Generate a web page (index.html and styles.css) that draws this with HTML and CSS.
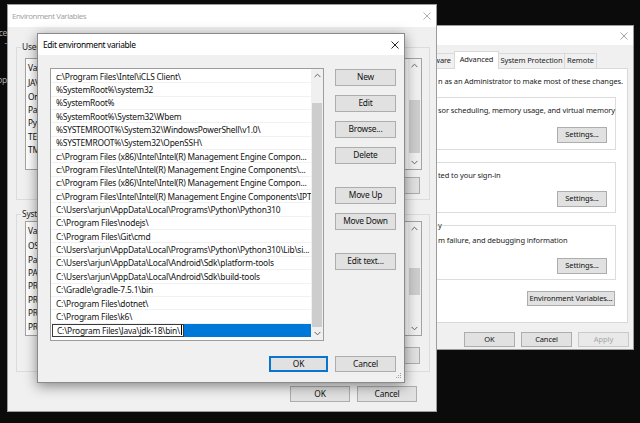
FILE: index.html
```html
<!DOCTYPE html>
<html lang="en">
<head>
    <meta charset="UTF-8">
    <meta name="viewport" content="width=device-width, initial-scale=1.0">
    <title>Edit environment variable</title>
    <link rel="stylesheet" href="styles.css">
</head>
<body>

<div id="desk">

    <div class="peek">
        <div class="peek_line">ce</div>
        <div class="peek_line">-</div>
        <div class="peek_line peek_low">op</div>
    </div>

    <!-- System Properties, behind everything -->
    <div class="win" id="sysprop">
        <div class="titlebar">
            <span class="title">System Properties</span>
            <svg class="close" viewBox="0 0 8 8" width="8" height="8"><path d="M0.5 0.5L7.5 7.5M7.5 0.5L0.5 7.5" stroke="#9a9a9a" stroke-width="0.9"/></svg>
        </div>
        <div class="sp_body">
            <div class="tabs">
                <div class="tab" id="tab_hw">Hardware</div>
                <div class="tab tab_sel" id="tab_adv">Advanced</div>
                <div class="tab" id="tab_sp">System Protection</div>
                <div class="tab" id="tab_rem">Remote</div>
            </div>
            <div class="tabpanel">
                <div class="sp_note">n as an Administrator to make most of these changes.</div>
                <fieldset class="sp_group">
                    <div class="sp_text">sor scheduling, memory usage, and virtual memory</div>
                    <div class="sp_btnrow"><button class="btn">Settings...</button></div>
                </fieldset>
                <fieldset class="sp_group sp_group2">
                    <div class="sp_text">ted to your sign-in</div>
                    <div class="sp_btnrow"><button class="btn">Settings...</button></div>
                </fieldset>
                <fieldset class="sp_group sp_group3">
                    <legend>y</legend>
                    <div class="sp_text">m failure, and debugging information</div>
                    <div class="sp_btnrow"><button class="btn">Settings...</button></div>
                </fieldset>
                <div class="sp_btnrow sp_envrow"><button class="btn" id="envbtn">Environment Variables...</button></div>
            </div>
            <div class="sp_foot">
                <button class="btn">OK</button>
                <button class="btn">Cancel</button>
                <button class="btn" disabled>Apply</button>
            </div>
        </div>
    </div>

    <!-- Environment Variables -->
    <div class="win" id="envvars">
        <div class="titlebar">
            <span class="title">Environment Variables</span>
            <svg class="close" viewBox="0 0 8 8" width="8" height="8"><path d="M0.5 0.5L7.5 7.5M7.5 0.5L0.5 7.5" stroke="#a8a8a8" stroke-width="0.9"/></svg>
        </div>
        <div class="ev_body">
            <fieldset class="ev_group">
                <legend>User variables for arjun</legend>
                <div class="listview lv_user">
                    <div class="lv_rows">
                        <div class="lv_head"><span class="lv_col1">Variable</span><span>Value</span></div>
                        <div class="lv_row"><span class="lv_col1">JAVA_HOME</span></div>
                        <div class="lv_row"><span class="lv_col1">OneDrive</span></div>
                        <div class="lv_row"><span class="lv_col1">Path</span></div>
                        <div class="lv_row"><span class="lv_col1">PyCharm Community Edition</span></div>
                        <div class="lv_row"><span class="lv_col1">TEMP</span></div>
                        <div class="lv_row"><span class="lv_col1">TMP</span></div>
                    </div>
                    <div class="vscroll">
                        <div class="sb_arrow"><svg viewBox="0 0 8 5" width="7" height="5"><path d="M0.7 4.3L4 1L7.3 4.3" fill="none" stroke="#606060" stroke-width="1.1"/></svg></div>
                        <div class="sb_track"><div class="sb_thumb" style="margin-top:28px;height:53px"></div></div>
                        <div class="sb_arrow"><svg viewBox="0 0 8 5" width="7" height="5"><path d="M0.7 0.7L4 4L7.3 0.7" fill="none" stroke="#606060" stroke-width="1.1"/></svg></div>
                    </div>
                </div>
                <div class="grp_btns">
                    <button class="btn">New...</button>
                    <button class="btn">Edit...</button>
                    <button class="btn">Delete</button>
                </div>
            </fieldset>

            <fieldset class="ev_group" id="sys_group">
                <legend>System variables</legend>
                <div class="listview lv_sys">
                    <div class="lv_rows">
                        <div class="lv_head"><span class="lv_col1">Variable</span><span>Value</span></div>
                        <div class="lv_row"><span class="lv_col1">OS</span></div>
                        <div class="lv_row"><span class="lv_col1">Path</span></div>
                        <div class="lv_row"><span class="lv_col1">PATHEXT</span></div>
                        <div class="lv_row"><span class="lv_col1">PROCESSOR_ARCHITECTURE</span></div>
                        <div class="lv_row"><span class="lv_col1">PROCESSOR_IDENTIFIER</span></div>
                        <div class="lv_row"><span class="lv_col1">PROCESSOR_LEVEL</span></div>
                        <div class="lv_row"><span class="lv_col1">PROCESSOR_REVISION</span></div>
                    </div>
                    <div class="vscroll">
                        <div class="sb_arrow"><svg viewBox="0 0 8 5" width="7" height="5"><path d="M0.7 4.3L4 1L7.3 4.3" fill="none" stroke="#606060" stroke-width="1.1"/></svg></div>
                        <div class="sb_track"><div class="sb_thumb" style="margin-top:33px;height:27px"></div></div>
                        <div class="sb_arrow"><svg viewBox="0 0 8 5" width="7" height="5"><path d="M0.7 0.7L4 4L7.3 0.7" fill="none" stroke="#606060" stroke-width="1.1"/></svg></div>
                    </div>
                </div>
                <div class="grp_btns">
                    <button class="btn">New...</button>
                    <button class="btn">Edit...</button>
                    <button class="btn">Delete</button>
                </div>
            </fieldset>

            <div class="ev_foot">
                <button class="btn">OK</button>
                <button class="btn">Cancel</button>
            </div>
        </div>
    </div>

    <!-- Edit environment variable, on top -->
    <div class="win" id="editvar">
        <div class="titlebar">
            <span class="title">Edit environment variable</span>
            <svg class="close" viewBox="0 0 8 8" width="8" height="8"><path d="M0.5 0.5L7.5 7.5M7.5 0.5L0.5 7.5" stroke="#111" stroke-width="0.9"/></svg>
        </div>
        <div class="ed_body">
            <div class="ed_main">
                <div class="pathlist">
                    <div class="pl_rows">
                        <div class="pl_row">c:\Program Files\Intel\iCLS Client\</div>
                        <div class="pl_row">%SystemRoot%\system32</div>
                        <div class="pl_row">%SystemRoot%</div>
                        <div class="pl_row">%SystemRoot%\System32\Wbem</div>
                        <div class="pl_row">%SYSTEMROOT%\System32\WindowsPowerShell\v1.0\</div>
                        <div class="pl_row">%SYSTEMROOT%\System32\OpenSSH\</div>
                        <div class="pl_row">c:\Program Files (x86)\Intel\Intel(R) Management Engine Compon...</div>
                        <div class="pl_row">c:\Program Files\Intel\Intel(R) Management Engine Components\...</div>
                        <div class="pl_row">c:\Program Files (x86)\Intel\Intel(R) Management Engine Compon...</div>
                        <div class="pl_row">c:\Program Files\Intel\Intel(R) Management Engine Components\IPT</div>
                        <div class="pl_row">C:\Users\arjun\AppData\Local\Programs\Python\Python310</div>
                        <div class="pl_row">C:\Program Files\nodejs\</div>
                        <div class="pl_row">C:\Program Files\Git\cmd</div>
                        <div class="pl_row">C:\Users\arjun\AppData\Local\Programs\Python\Python310\Lib\si...</div>
                        <div class="pl_row">C:\Users\arjun\AppData\Local\Android\Sdk\platform-tools</div>
                        <div class="pl_row">C:\Users\arjun\AppData\Local\Android\Sdk\build-tools</div>
                        <div class="pl_row">C:\Gradle\gradle-7.5.1\bin</div>
                        <div class="pl_row">C:\Program Files\dotnet\</div>
                        <div class="pl_row">C:\Program Files\k6\</div>
                        <div class="pl_row pl_editing">
                            <span class="pl_edit">C:\Program Files\Java\jdk-18\bin\<span class="caret"></span></span>
                            <span class="pl_sel"></span>
                        </div>
                    </div>
                    <div class="vscroll">
                        <div class="sb_arrow"><svg viewBox="0 0 8 5" width="7" height="5"><path d="M0.7 4.3L4 1L7.3 4.3" fill="none" stroke="#606060" stroke-width="1.1"/></svg></div>
                        <div class="sb_track"><div class="sb_thumb" style="margin-top:21px;flex:1"></div></div>
                        <div class="sb_arrow"><svg viewBox="0 0 8 5" width="7" height="5"><path d="M0.7 0.7L4 4L7.3 0.7" fill="none" stroke="#606060" stroke-width="1.1"/></svg></div>
                    </div>
                </div>
                <div class="ed_side">
                    <button class="btn">New</button>
                    <button class="btn">Edit</button>
                    <button class="btn">Browse...</button>
                    <button class="btn">Delete</button>
                    <button class="btn btn_gap">Move Up</button>
                    <button class="btn">Move Down</button>
                    <button class="btn btn_gap">Edit text...</button>
                </div>
            </div>
            <div class="ed_foot">
                <button class="btn btn_default">OK</button>
                <button class="btn">Cancel</button>
            </div>
            <svg class="grip" viewBox="0 0 6 6" width="6" height="6">
                <rect x="4" y="0" width="1" height="1" fill="#a0a0a0"/>
                <rect x="2" y="2" width="1" height="1" fill="#a0a0a0"/>
                <rect x="4" y="2" width="1" height="1" fill="#a0a0a0"/>
                <rect x="0" y="4" width="1" height="1" fill="#a0a0a0"/>
                <rect x="2" y="4" width="1" height="1" fill="#a0a0a0"/>
                <rect x="4" y="4" width="1" height="1" fill="#a0a0a0"/>
            </svg>
        </div>
    </div>

</div>

</body>
</html>
```

FILE: styles.css
```css
body{
    margin: 0;
    background-color: #0b0b0b;
    font-family: "Noto Sans", "Open Sans", sans-serif;
    font-size: 8.4px;
    letter-spacing: -0.2px;
    color: #111;
}
#desk{
    position: relative;
    width: 640px;
    height: 423px;
    overflow: hidden;
}

/* bits of desktop icon labels peeking out on the left */
.peek{
    position: absolute;
    left: 0;
    top: 28px;
    width: 7px;
    overflow: hidden;
    color: #a9a9a9;
    line-height: 10px;
}
.peek_line{
    display: flex;
    justify-content: flex-end;
    white-space: nowrap;
}
.peek_low{
    margin-top: 27px;
}

/* windows */
.win{
    position: absolute;
    box-sizing: border-box;
    display: flex;
    flex-direction: column;
    background-color: #f0f0f0;
    border: 1px solid #9c9c9c;
    overflow: hidden;
}
#sysprop{
    left: 300px;
    top: 25px;
    width: 334px;
    height: 325px;
    font-size: 7.5px;
    letter-spacing: -0.1px;
}
#envvars{
    left: 7px;
    top: 4px;
    width: 430px;
    height: 408px;
}
#editvar{
    left: 37px;
    top: 33px;
    width: 368px;
    height: 350px;
    border-color: #8a8a8a;
    box-shadow: 0 3px 12px rgba(0, 0, 0, 0.45);
}
.titlebar{
    flex: none;
    display: flex;
    align-items: center;
    justify-content: space-between;
    background-color: #fff;
    padding: 0 5px 0 5px;
    white-space: nowrap;
}
#sysprop .titlebar{
    height: 19px;
    color: #a0a0a0;
}
#envvars .titlebar{
    height: 22px;
    padding-left: 4px;
    color: #a3a3a3;
    font-size: 7.8px;
    letter-spacing: -0.4px;
}
#editvar .titlebar{
    height: 21px;
    color: #000;
    letter-spacing: -0.35px;
}
.close{
    flex: none;
}

/* buttons */
.btn{
    box-sizing: border-box;
    font-family: inherit;
    font-size: inherit;
    letter-spacing: inherit;
    color: #111;
    background-color: #e1e1e1;
    border: 1px solid #adadad;
    border-radius: 0;
    padding: 0;
    margin: 0;
    line-height: 1;
    white-space: nowrap;
}
.btn:disabled{
    color: #a6a6a6;
    background-color: #e9e9e9;
    border-color: #cacaca;
}
.btn_default{
    border: 2px solid #0a74d0;
}

/* scrollbars */
.vscroll{
    flex: none;
    width: 13px;
    display: flex;
    flex-direction: column;
    background-color: #f0f0f0;
}
.sb_arrow{
    flex: none;
    height: 13px;
    display: flex;
    align-items: center;
    justify-content: center;
}
.sb_track{
    flex: 1;
    display: flex;
    flex-direction: column;
}
.sb_thumb{
    background-color: #cdcdcd;
    margin: 0 1px;
}

/* System Properties */
.sp_body{
    flex: 1;
    display: flex;
    flex-direction: column;
    padding: 6px 5px 0 128px;
}
.tabs{
    display: flex;
    justify-content: flex-end;
    align-items: flex-end;
    height: 17px;
    padding-right: 31px;
}
.tab{
    box-sizing: border-box;
    flex: none;
    height: 15px;
    margin-left: -1px;
    border: 1px solid #d9d9d9;
    border-bottom: none;
    text-align: center;
    line-height: 13px;
    white-space: nowrap;
    overflow: hidden;
    color: #222;
}
#tab_hw{
    width: 56px;
    text-align: right;
    padding-right: 3px;
}
#tab_adv{ width: 45px; }
#tab_sp{ width: 67px; }
#tab_rem{ width: 33px; }
.tab_sel{
    position: relative;
    z-index: 1;
    height: 18px;
    margin-bottom: -1px;
    background-color: #fff;
    line-height: 15px;
}
.tabpanel{
    height: 255px;
    box-sizing: border-box;
    display: flex;
    flex-direction: column;
    background-color: #fff;
    border: 1px solid #d9d9d9;
    padding: 6px 11px 0 8px;
    color: #222;
}
.sp_note{
    line-height: 12px;
    white-space: nowrap;
}
.sp_group{
    margin: 10px 0 0 -10px;
    padding: 6px 8px 6px 9px;
    border: 1px solid #dcdcdc;
    min-width: 0;
}
.sp_group2{
    margin-top: 12px;
    padding-bottom: 5px;
}
.sp_group2 .sp_btnrow{
    margin-top: 10px;
}
.sp_group3{
    margin-top: 6px;
    padding-top: 3px;
    padding-bottom: 5px;
}
.sp_group3 legend{
    padding: 0;
    line-height: 12px;
}
.sp_group3 .sp_btnrow{
    margin-top: 12px;
}
.sp_text{
    line-height: 12px;
    white-space: nowrap;
}
.sp_btnrow{
    display: flex;
    justify-content: flex-end;
    margin-top: 11px;
}
.sp_group .btn{
    width: 50px;
    height: 16px;
}
.sp_envrow{
    margin-right: 1px;
}
#envbtn{
    width: 88px;
    height: 15px;
}
.sp_foot{
    display: flex;
    justify-content: flex-end;
    gap: 6px;
    margin-top: 9px;
    margin-right: -1px;
}
.sp_foot .btn{
    width: 51px;
    height: 15px;
}

/* Environment Variables */
.ev_body{
    flex: 1;
    display: flex;
    flex-direction: column;
    padding: 14px 6px 8px 8px;
}
.ev_group{
    margin: 0;
    padding: 5px 7px 5px 8px;
    border: 1px solid #dcdcdc;
    min-width: 0;
}
.ev_group legend{
    padding: 0 1px;
    margin-left: -4px;
    line-height: 12px;
    color: #222;
}
#sys_group{
    margin-top: 8px;
    padding-top: 1px;
    padding-bottom: 7px;
}
#sys_group .grp_btns{
    margin-top: 11px;
}
.listview{
    display: flex;
    box-sizing: border-box;
    border: 1px solid #a3a3a3;
    background-color: #fff;
}
.lv_user{
    height: 112px;
}
.lv_sys{
    height: 115px;
}
.lv_rows{
    flex: 1;
    min-width: 0;
    padding-left: 2px;
    overflow: hidden;
}
.lv_head{
    height: 17px;
    display: flex;
    align-items: center;
    white-space: nowrap;
}
.lv_row{
    height: 13.4px;
    display: flex;
    align-items: center;
    white-space: nowrap;
}
.lv_col1{
    flex: none;
    width: 150px;
}
.grp_btns{
    display: flex;
    justify-content: flex-end;
    gap: 7px;
    margin-top: 7px;
    padding-right: 2px;
}
.grp_btns .btn{
    width: 60px;
    height: 17px;
}
.ev_foot{
    display: flex;
    justify-content: flex-end;
    gap: 7px;
    margin-top: 14px;
    padding-right: 13px;
}
.ev_foot .btn{
    width: 60px;
    height: 16px;
}

/* Edit environment variable */
.ed_body{
    position: relative;
    flex: 1;
    display: flex;
    flex-direction: column;
    padding: 13px 8px 0 12px;
}
.ed_main{
    display: flex;
    gap: 11px;
}
.pathlist{
    display: flex;
    width: 274px;
    height: 273px;
    box-sizing: border-box;
    border: 1px solid #9d9d9d;
    background-color: #fff;
}
.pathlist .vscroll{
    width: 12px;
}
.pl_rows{
    flex: 1;
    min-width: 0;
    padding-top: 1px;
}
.pl_row{
    box-sizing: border-box;
    height: 13.35px;
    display: flex;
    align-items: center;
    padding-left: 5px;
    border-bottom: 1px solid #f1f1f1;
    white-space: nowrap;
    overflow: hidden;
}
.pl_editing{
    padding-left: 1px;
    border-bottom: none;
    align-items: stretch;
}
.pl_edit{
    display: flex;
    align-items: center;
    padding: 0 1px 0 4px;
    border: 1px solid #3a3a3a;
    background-color: #fff;
}
.caret{
    display: inline-block;
    width: 1px;
    height: 10px;
    margin-left: 1px;
    background-color: #000;
}
.pl_sel{
    flex: 1;
    background-color: #0078d7;
}
.ed_side{
    width: 61px;
    display: flex;
    flex-direction: column;
}
.ed_side .btn{
    height: 17px;
    margin-top: 9px;
}
.ed_side .btn:first-child{
    margin-top: 1px;
}
.ed_side .btn_gap{
    margin-top: 23px;
}
.ed_foot{
    display: flex;
    justify-content: flex-end;
    gap: 7px;
    margin-top: 15px;
}
.ed_foot .btn{
    width: 61px;
    height: 16px;
}
.ed_foot .btn_default{
    width: 59px;
}
.grip{
    position: absolute;
    right: 2px;
    bottom: 3px;
}
```
